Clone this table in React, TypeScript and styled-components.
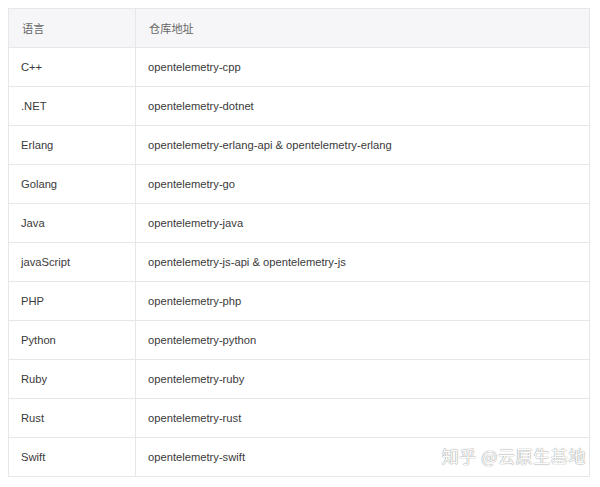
import React from 'react'
import styled, { createGlobalStyle } from 'styled-components'

const GlobalStyle = createGlobalStyle`
  body {
    margin: 0;
    background: #fff;
    font-family: "Liberation Sans", Arial, "Noto Sans CJK SC", sans-serif;
  }
`

const Page = styled.main`
  position: relative;
  width: 600px;
  height: 487px;
  padding: 8px 10px 0 8px;
  box-sizing: border-box;
`

const Table = styled.table`
  width: 582px;
  border-collapse: collapse;
  table-layout: fixed;
  font-size: 11.2px;
  color: #3a3a3a;
`

const HeadCell = styled.th`
  height: 38px;
  padding: 0 0 0 13px;
  text-align: left;
  font-weight: normal;
  color: #666;
  background: #f6f6f9;
  border: 1px solid #e7e7ea;
  font-family: "Liberation Sans", "Noto Sans CJK SC", sans-serif;
`

const Cell = styled.td`
  height: 38px;
  padding: 0 0 0 12px;
  border: 1px solid #e7e7ea;
  white-space: nowrap;
`

const Watermark = styled.div`
  position: absolute;
  right: 14px;
  bottom: 19px;
  font-size: 17px;
  letter-spacing: 0.6px;
  color: #fcfcfc;
  font-family: "Noto Sans CJK SC", sans-serif;
  text-shadow: 0 0 1px #999, 0 0 1px #999;
`

const rows: [string, string][] = [
  ['C++', 'opentelemetry-cpp'],
  ['.NET', 'opentelemetry-dotnet'],
  ['Erlang', 'opentelemetry-erlang-api & opentelemetry-erlang'],
  ['Golang', 'opentelemetry-go'],
  ['Java', 'opentelemetry-java'],
  ['javaScript', 'opentelemetry-js-api & opentelemetry-js'],
  ['PHP', 'opentelemetry-php'],
  ['Python', 'opentelemetry-python'],
  ['Ruby', 'opentelemetry-ruby'],
  ['Rust', 'opentelemetry-rust'],
  ['Swift', 'opentelemetry-swift'],
]

export default function App() {
  return (
    <Page>
      <GlobalStyle />
      <Table>
        <colgroup>
          <col style={{ width: 127 }} />
          <col />
        </colgroup>
        <thead>
          <tr>
            <HeadCell>语言</HeadCell>
            <HeadCell>仓库地址</HeadCell>
          </tr>
        </thead>
        <tbody>
          {rows.map(([lang, repo]) => (
            <tr key={lang}>
              <Cell>{lang}</Cell>
              <Cell>{repo}</Cell>
            </tr>
          ))}
        </tbody>
      </Table>
      <Watermark>知乎 @云原生基地</Watermark>
    </Page>
  )
}
